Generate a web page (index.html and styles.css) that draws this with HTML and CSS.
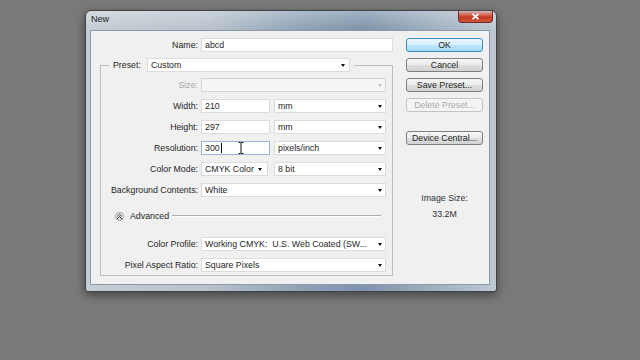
FILE: index.html
```html
<!DOCTYPE html>
<html lang="en">
<head>
    <meta charset="UTF-8">
    <meta name="viewport" content="width=device-width, initial-scale=1.0">
    <title>New</title>
    <link rel="stylesheet" href="styles.css">
</head>
<body>
    <div class="desktop">
        <div class="window">
            <div class="titlebar">
                <span class="title">New</span>
                <div class="close">
                    <svg width="9" height="7" viewBox="0 0 9 7"><path d="M1.5 0.8 L7.5 6.2 M7.5 0.8 L1.5 6.2" stroke="#fff" stroke-width="1.8"/></svg>
                </div>
            </div>
            <div class="client">
                <div class="main">
                    <div class="row">
                        <label>Name:</label>
                        <div class="input">abcd</div>
                    </div>
                    <fieldset class="group">
                        <legend><span class="legend-inner"><span class="legend-label">Preset:</span><span class="select preset-select">Custom<i class="arrow"></i></span></span></legend>
                        <div class="fields">
                            <label class="dim">Size:</label>
                            <div class="select disabled"><i class="arrow"></i></div>

                            <label>Width:</label>
                            <div class="pair">
                                <div class="input short">210</div>
                                <div class="select unit">mm<i class="arrow"></i></div>
                            </div>

                            <label>Height:</label>
                            <div class="pair">
                                <div class="input short">297</div>
                                <div class="select unit">mm<i class="arrow"></i></div>
                            </div>

                            <label>Resolution:</label>
                            <div class="pair">
                                <div class="input short focused">300<span class="caret"></span>
                                    <svg class="ibeam" width="6" height="12" viewBox="0 0 6 12"><path d="M0.5 0.5 H2.5 L3 1 L3.5 0.5 H5.5 M3 1 V11 M0.5 11.5 H2.5 L3 11 L3.5 11.5 H5.5" stroke="#111" stroke-width="1" fill="none"/></svg>
                                </div>
                                <div class="select unit">pixels/inch<i class="arrow"></i></div>
                            </div>

                            <label>Color Mode:</label>
                            <div class="pair">
                                <div class="select mode">CMYK Color<i class="arrow"></i></div>
                                <div class="select unit">8 bit<i class="arrow"></i></div>
                            </div>

                            <label>Background Contents:</label>
                            <div class="select">White<i class="arrow"></i></div>
                        </div>

                        <div class="advanced">
                            <span class="adv-icon">
                                <svg width="7" height="7" viewBox="0 0 7 7"><path d="M1.2 3.4 L3.5 1.2 L5.8 3.4 M1.2 5.8 L3.5 3.6 L5.8 5.8" stroke="#222" stroke-width="1" fill="none"/></svg>
                            </span>
                            <span class="adv-text">Advanced</span>
                            <span class="adv-line"></span>
                        </div>

                        <div class="fields">
                            <label>Color Profile:</label>
                            <div class="select">Working CMYK:&nbsp; U.S. Web Coated (SW...<i class="arrow"></i></div>

                            <label>Pixel Aspect Ratio:</label>
                            <div class="select">Square Pixels<i class="arrow"></i></div>
                        </div>
                    </fieldset>
                </div>
                <div class="side">
                    <div class="btn default">OK</div>
                    <div class="btn">Cancel</div>
                    <div class="btn">Save Preset...</div>
                    <div class="btn off">Delete Preset...</div>
                    <div class="btn device">Device Central...</div>
                    <div class="image-size">
                        <div>Image Size:</div>
                        <div>33.2M</div>
                    </div>
                </div>
            </div>
        </div>
    </div>
</body>
</html>
```

FILE: styles.css
```css
body {
    margin: 0;
    background: #797979;
    font-family: "Liberation Sans", Arial, sans-serif;
    font-size: 8.8px;
    color: #262626;
}
.desktop {
    height: 360px;
    box-sizing: border-box;
    padding: 10px 0 0 85px;
}
.window {
    width: 412px;
    height: 282px;
    box-sizing: border-box;
    border: 1px solid #3e434a;
    border-radius: 6px 6px 3px 3px;
    padding: 0 6px 6px 4px;
    background:
        linear-gradient(180deg, rgba(255, 255, 255, 0.28), rgba(255, 255, 255, 0) 18px),
        linear-gradient(90deg, #c5cdd5 0%, #b8c2cc 30%, #8fa3b7 52%, #7e94aa 68%, #a0b0c1 85%, #bdc8d3 100%);
    box-shadow: 0 3px 10px rgba(0, 0, 0, 0.45);
}
.titlebar {
    height: 19px;
    display: flex;
    align-items: flex-start;
}
.title {
    padding: 2px 0 0 1px;
    line-height: 12px;
    font-size: 9px;
    color: #1b1b1b;
}
.close {
    margin: -1px -3px 0 auto;
    width: 35px;
    height: 13px;
    box-sizing: border-box;
    border: 1px solid #6e2c22;
    border-top: none;
    border-radius: 0 0 4px 4px;
    background: linear-gradient(180deg, #e9a99b 0%, #d8675300 0%, #d86753 40%, #c23a22 60%, #d0553d 100%);
    display: flex;
    align-items: center;
    justify-content: center;
}
.client {
    width: 400px;
    height: 255px;
    box-sizing: border-box;
    border: 1px solid #8d99a6;
    background: #f0f0f0;
    display: flex;
}
.main {
    width: 310px;
    padding-top: 7px;
}
.row {
    display: grid;
    grid-template-columns: 107px 192px;
    column-gap: 3px;
    height: 14px;
    align-items: center;
}
label {
    text-align: right;
    white-space: nowrap;
}
.dim {
    color: #a8a8a8;
}
.input,
.select {
    position: relative;
    height: 14px;
    box-sizing: border-box;
    background: #fff;
    border: 1px solid #dcdcdc;
    padding: 0 3px 0 3px;
    display: flex;
    align-items: center;
    white-space: nowrap;
}
.select {
    justify-content: space-between;
}
.arrow {
    width: 0;
    height: 0;
    border-left: 2.5px solid transparent;
    border-right: 2.5px solid transparent;
    border-top: 3px solid #111;
}
.disabled {
    background: #f5f5f5;
    border-color: #d6d6d6;
    justify-content: flex-end;
}
.disabled .arrow {
    border-top-color: #c4c4c4;
}
.group {
    margin: 6px 0 0 9px;
    padding: 6px 5px 3px 0;
    width: 293px;
    box-sizing: border-box;
    border: 1px solid #bdbdbd;
    min-width: 0;
}
.group legend {
    margin-left: 8px;
    padding: 0 4px;
}
.legend-inner {
    display: flex;
    align-items: center;
}
.legend-label {
    width: 28px;
    margin-right: 6px;
}
.preset-select {
    width: 203px;
    padding-right: 4px;
}
.fields {
    display: grid;
    grid-template-columns: 97px 185px;
    column-gap: 3px;
    row-gap: 7px;
    grid-auto-rows: 14px;
    align-items: center;
}
.pair {
    display: flex;
    justify-content: space-between;
}
.short {
    width: 69px;
}
.unit {
    width: 112px;
}
.mode {
    width: 67px;
    padding-right: 5px;
}
.focused {
    border-color: #9cb5d2;
}
.caret {
    display: inline-block;
    width: 1px;
    height: 10px;
    background: #111;
    margin-left: 1px;
}
.ibeam {
    position: absolute;
    left: 36px;
    top: 0;
}
.advanced {
    display: flex;
    align-items: center;
    height: 16px;
    margin: 11px 6px 13px 14px;
}
.adv-icon {
    width: 9px;
    height: 9px;
    box-sizing: border-box;
    border: 1px solid #9c9c9c;
    border-radius: 50%;
    background: linear-gradient(180deg, #ffffff, #dedede);
    display: flex;
    align-items: center;
    justify-content: center;
}
.adv-text {
    margin-left: 6px;
}
.adv-line {
    flex: 1;
    height: 1px;
    margin-left: 3px;
    background: #acacac;
    border-bottom: 1px solid #fff;
}
.side {
    width: 77px;
    margin-left: 5px;
    padding-top: 7px;
    display: flex;
    flex-direction: column;
    gap: 6px;
}
.btn {
    height: 14px;
    box-sizing: border-box;
    border: 1px solid #7f7f7f;
    border-radius: 3px;
    background: linear-gradient(180deg, #f6f6f6 0%, #ebebeb 50%, #dddddd 51%, #d3d3d3 100%);
    text-align: center;
    line-height: 12px;
    color: #1e1e1e;
}
.default {
    border-color: #3b8dc6;
    background: linear-gradient(180deg, #eaf6fd 0%, #d9effc 50%, #bee6fd 51%, #a7d9f5 100%);
}
.off {
    border-color: #c4c4c4;
    background: #f4f4f4;
    color: #acacac;
}
.device {
    margin-top: 13px;
}
.image-size {
    margin-top: 39px;
    text-align: center;
    line-height: 16px;
    color: #303030;
}
```
